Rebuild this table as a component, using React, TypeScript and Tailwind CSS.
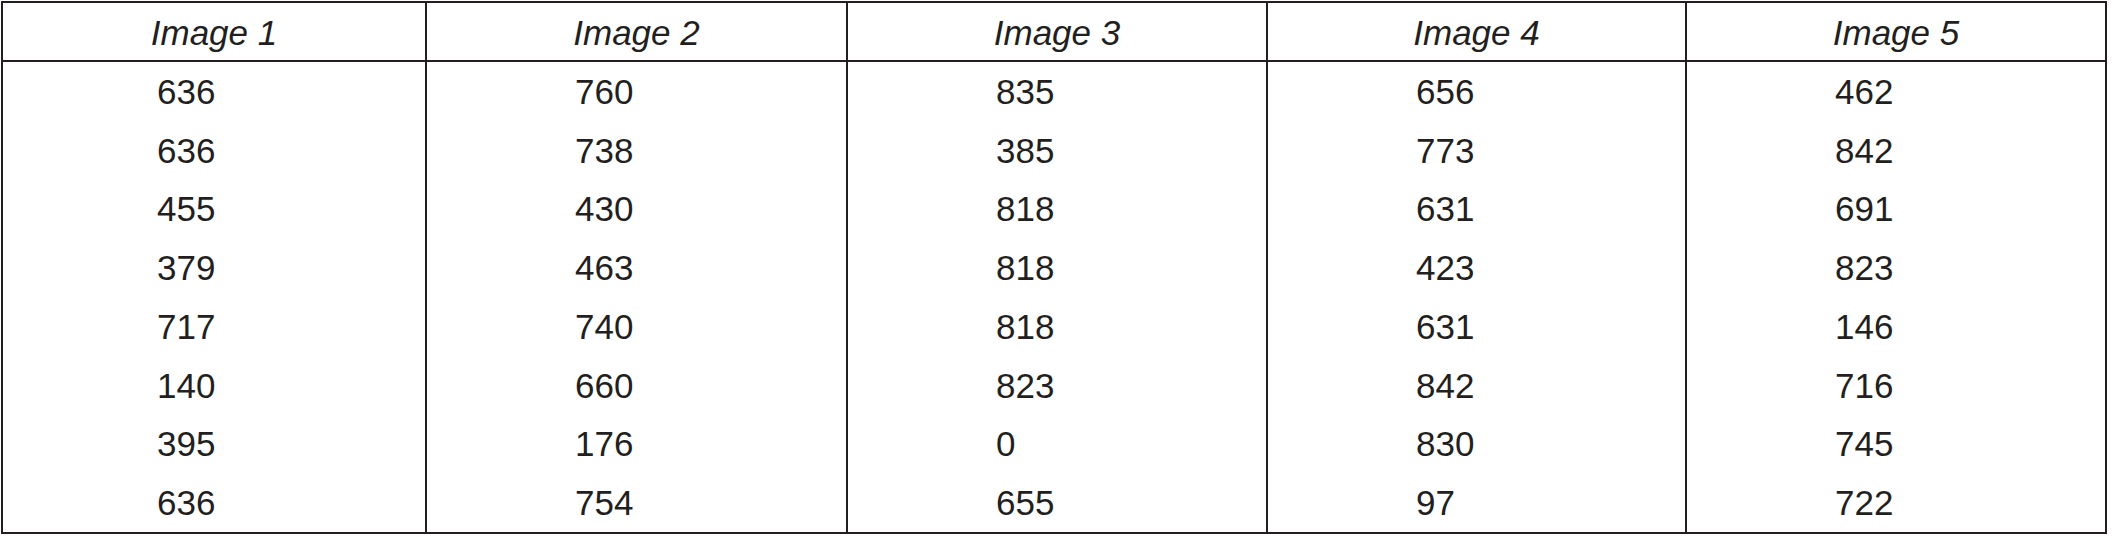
const headers = ['Image 1', 'Image 2', 'Image 3', 'Image 4', 'Image 5'];

// rows of the table, one array per row
const rows = [
  [636, 760, 835, 656, 462],
  [636, 738, 385, 773, 842],
  [455, 430, 818, 631, 691],
  [379, 463, 818, 423, 823],
  [717, 740, 818, 631, 146],
  [140, 660, 823, 842, 716],
  [395, 176, 0, 830, 745],
  [636, 754, 655, 97, 722],
];

const App = () => {
  return (
    <div className="bg-white w-[2118px] h-[537px] pt-px pl-px font-['Liberation_Sans',Arial,sans-serif] text-[#231f20]">
      <div className="w-[2106px] h-[533px] border-2 border-[#231f20] grid grid-cols-[422px_421px_420px_419px_420px]">
        {headers.map((h, col) => (
          <div
            key={h}
            className={`flex flex-col ${col > 0 ? 'border-l-2 border-[#231f20]' : ''}`}
          >
            <div className="h-[59px] border-b-2 border-[#231f20] flex items-center justify-center pt-[2px]">
              <span className="text-[35px] italic leading-none">{h}</span>
            </div>
            {rows.map((row, i) => (
              <div
                key={i}
                className={`h-[58.75px] flex items-center ${col === 0 ? 'pl-[154px]' : 'pl-[148px]'}`}
              >
                <span className="text-[35px] leading-none">{row[col]}</span>
              </div>
            ))}
          </div>
        ))}
      </div>
    </div>
  );
};

export default App;
